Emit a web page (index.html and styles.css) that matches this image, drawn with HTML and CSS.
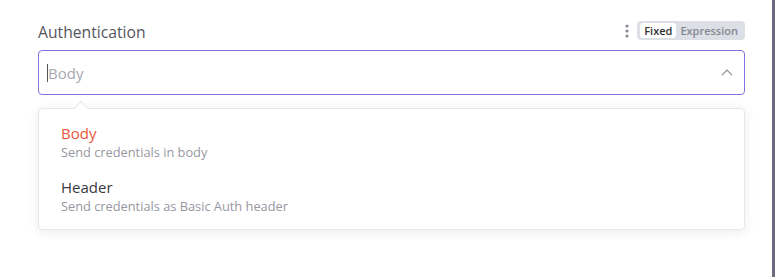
FILE: index.html
```html
<!DOCTYPE html>
<html lang="en">
<head>
<meta charset="utf-8">
<title>Authentication</title>
<link rel="stylesheet" href="styles.css">
</head>
<body>
<div class="page">
  <div class="panel">
    <div class="label-row">
      <span class="label">Authentication</span>
      <div class="controls">
        <svg class="dots" width="4" height="14" viewBox="0 0 4 14">
          <circle cx="2" cy="2" r="1.6"/>
          <circle cx="2" cy="7" r="1.6"/>
          <circle cx="2" cy="12" r="1.6"/>
        </svg>
        <div class="toggle">
          <span class="seg seg-active">Fixed</span>
          <span class="seg">Expression</span>
        </div>
      </div>
    </div>
    <div class="select">
      <span class="caret"></span>
      <span class="placeholder">Body</span>
      <svg class="chevron" width="12" height="7" viewBox="0 0 12 7">
        <polyline points="1,6.2 6,1.2 11,6.2" fill="none" stroke="#8a8a94" stroke-width="1.2"/>
      </svg>
    </div>
    <div class="dropdown">
      <span class="arrow"></span>
      <ul class="options">
        <li class="option selected">
          <div class="opt-title">Body</div>
          <div class="opt-desc">Send credentials in body</div>
        </li>
        <li class="option">
          <div class="opt-title">Header</div>
          <div class="opt-desc">Send credentials as Basic Auth header</div>
        </li>
      </ul>
    </div>
  </div>
  <div class="scrollbar"></div>
</div>
</body>
</html>
```
FILE: styles.css
```css
* { box-sizing: border-box; }
html, body { margin: 0; padding: 0; background: #fff; }
body { font-family: "Open Sans", "Liberation Sans", sans-serif; }
.page { display: flex; width: 775px; height: 277px; overflow: hidden; }
.panel { flex: 1; padding: 21px 27px 0 38px; }
.scrollbar { width: 3px; background: #6d6b80; }
.label-row { display: flex; align-items: center; justify-content: space-between; height: 19px; margin-bottom: 10px; }
.label { font-size: 15.7px; color: #55555d; font-weight: 500; margin-top: 2px; }
.controls { display: flex; align-items: center; gap: 8px; }
.dots { fill: #8a8a94; margin-top: 1px; }
.toggle { display: flex; align-items: center; background: #dcdfe6; border-radius: 4px; padding: 2px 3px; height: 19px; }
.seg { font-size: 11px; line-height: 15px; padding: 0 4px; color: #85878f; font-weight: 600; }
.seg-active { background: #fff; color: #303133; border-radius: 3px; }
.select { position: relative; display: flex; align-items: center; height: 45px; border: 1px solid #8373e0; border-radius: 4px; padding: 0 0 0 8px; }
.caret { width: 1px; height: 18px; background: #555; }
.placeholder { flex: 1; font-size: 15px; color: #a8a8b0; }
.chevron { margin-right: 11px; }
.dropdown { position: relative; margin-top: 13px; border: 1px solid #e4e7ed; border-radius: 4px; background: #fff; box-shadow: 0 2px 12px rgba(0,0,0,0.08); }
.arrow { position: absolute; top: -6px; left: 37px; width: 10px; height: 10px; background: #fff; border-left: 1px solid #e4e7ed; border-top: 1px solid #e4e7ed; transform: rotate(45deg); }
.options { list-style: none; margin: 0; padding: 6px 0; }
.option { padding: 8px 22px; }
.opt-title { font-size: 15px; line-height: 20px; color: #3a3a40; }
.selected .opt-title { color: #e9553b; font-weight: 500; }
.opt-desc { font-size: 12.8px; line-height: 18px; color: #97979f; }
```
